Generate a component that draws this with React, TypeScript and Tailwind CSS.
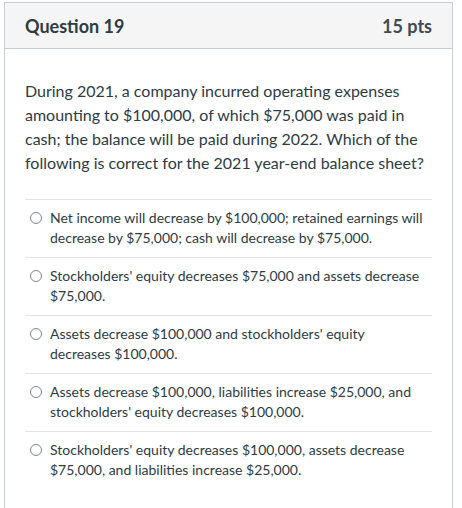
import React from "react"

const options: string[] = [
  "Net income will decrease by $100,000; retained earnings will decrease by $75,000; cash will decrease by $75,000.",
  "Stockholders' equity decreases $75,000 and assets decrease $75,000.",
  "Assets decrease $100,000 and stockholders' equity decreases $100,000.",
  "Assets decrease $100,000, liabilities increase $25,000, and stockholders' equity decreases $100,000.",
  "Stockholders' equity decreases $100,000, assets decrease $75,000, and liabilities increase $25,000.",
]

const Option = ({ text }: { text: string }): JSX.Element => (
  <div className="flex border-t border-[#e2e4e6] pt-2 pb-[9px] pr-2">
    <div className="ml-[5px] mr-2 flex h-5 shrink-0 items-center">
      <span className="block h-3 w-3 rounded-full border border-[#7d858c] bg-white" />
    </div>
    <p className="text-sm leading-5 text-[#2d3b45]">{text}</p>
  </div>
)

export default function App(): JSX.Element {
  return (
    <div
      className="h-[508px] w-[462px] overflow-hidden bg-white pt-[2px] pl-1"
      style={{ fontFamily: "Lato, 'Liberation Sans', sans-serif" }}
    >
      <div className="h-[520px] w-[449px] border border-[#c7cdd1] border-b-0">
        <div className="flex h-[46px] items-center justify-between border-b border-[#c7cdd1] bg-[#f5f5f5] px-5">
          <h2 className="text-lg font-bold text-[#2d3b45]">Question 19</h2>
          <span className="text-lg font-bold text-[#404b53]">15 pts</span>
        </div>
        <div className="px-5 pt-[30px]">
          <p className="text-base leading-6 text-[#2d3b45]">
            During 2021, a company incurred operating expenses amounting to
            $100,000, of which $75,000 was paid in cash; the balance will be
            paid during 2022. Which of the following is correct for the 2021
            year-end balance sheet?
          </p>
          <div className="mt-6">
            {options.map((o) => (
              <Option key={o} text={o} />
            ))}
          </div>
        </div>
      </div>
    </div>
  )
}
